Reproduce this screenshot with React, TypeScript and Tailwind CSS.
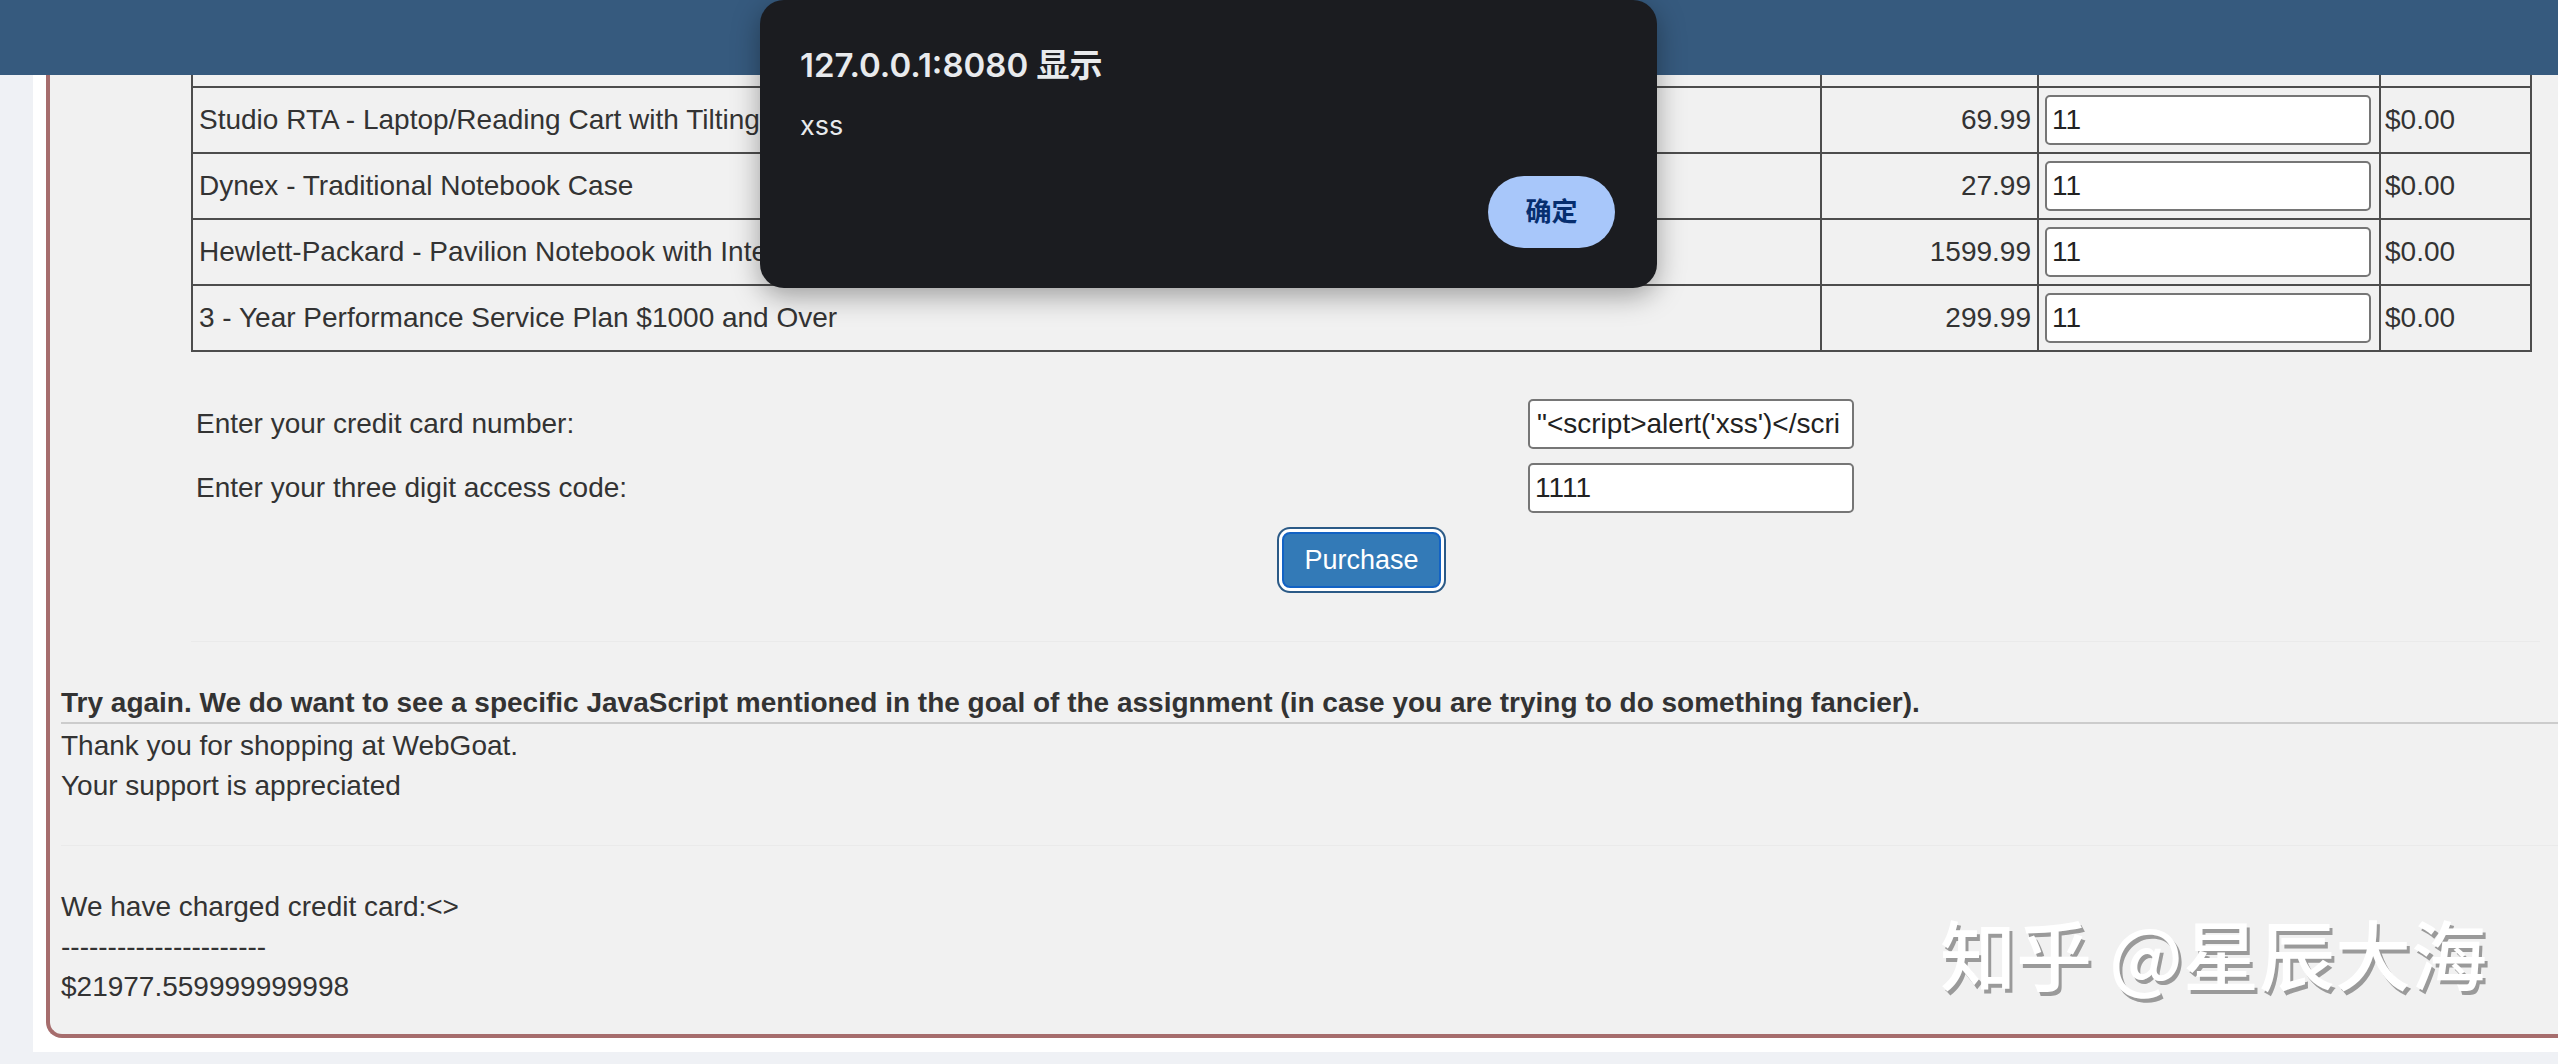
import React from 'react';

const items = [
  { name: 'Studio RTA - Laptop/Reading Cart with Tilting Surface - Cherry', price: '69.99' },
  { name: 'Dynex - Traditional Notebook Case', price: '27.99' },
  { name: 'Hewlett-Packard - Pavilion Notebook with Intel Centrino', price: '1599.99' },
  { name: '3 - Year Performance Service Plan $1000 and Over', price: '299.99' },
];

const AlertDialog = () => (
  <div className="absolute left-[760px] top-0 flex h-[288px] w-[897px] flex-col rounded-[24px] bg-[#1b1c20] px-[40px] pt-[45px] font-['Inter','Noto_Sans_CJK_SC',sans-serif] shadow-[0_8px_28px_rgba(0,0,0,0.35)]">
    <div className="text-[33px] font-semibold leading-[40px] text-[#e8eaed]">127.0.0.1:8080 显示</div>
    <div className="mt-[21px] text-[27px] leading-[40px] text-[#e8eaed]">xss</div>
    <div className="mt-[30px] flex justify-end pr-[2px]">
      <button className="flex h-[72px] w-[127px] items-center justify-center rounded-full bg-[#a8c7fa] text-[26px] font-bold text-[#062e6f]">
        确定
      </button>
    </div>
  </div>
);

export default function App() {
  return (
    <div className="relative h-[1064px] w-[2558px] overflow-hidden bg-[#eff1f5] font-['Liberation_Sans',Arial,sans-serif] text-[28px] leading-[40px] text-[#333]">
      <div className="h-[75px] bg-[#365a7e]" />

      <div className="pb-[12px] pl-[33px]">
        <div className="bg-white pb-[14px] pl-[13px]">
          <div className="rounded-bl-[16px] border-b-4 border-l-4 border-[#a66d6d] bg-[#f1f1f1] pb-[27px]">
            {/* cart table, header row is under the nav bar */}
            <div className="ml-[141px] w-[2341px] border-x-2 border-[#4d4d4d]">
              <div className="flex h-[13px] border-b-2 border-[#4d4d4d]">
                <div className="w-[1629px] border-r-2 border-[#4d4d4d]" />
                <div className="w-[217px] border-r-2 border-[#4d4d4d]" />
                <div className="w-[342px] border-r-2 border-[#4d4d4d]" />
                <div className="w-[149px]" />
              </div>
              {items.map(item => (
                <div key={item.name} className="flex h-[66px] border-b-2 border-[#4d4d4d]">
                  <div className="flex w-[1629px] items-center overflow-hidden whitespace-nowrap border-r-2 border-[#4d4d4d] pl-[6px]">
                    {item.name}
                  </div>
                  <div className="flex w-[217px] items-center justify-end border-r-2 border-[#4d4d4d] pr-[6px]">
                    {item.price}
                  </div>
                  <div className="flex w-[342px] items-center border-r-2 border-[#4d4d4d] pl-[6px]">
                    <div className="h-[50px] w-[326px] rounded-[5px] border-2 border-[#767676] bg-white px-[5px] leading-[46px] text-[#222]">
                      11
                    </div>
                  </div>
                  <div className="flex w-[149px] items-center pl-[4px]">$0.00</div>
                </div>
              ))}
            </div>

            {/* payment form */}
            <div className="ml-[141px] mt-[40px] w-[2341px]">
              <div className="flex h-[64px] items-center">
                <div className="w-[1337px] pl-[5px]">Enter your credit card number:</div>
                <div className="h-[50px] w-[326px] overflow-hidden whitespace-nowrap rounded-[5px] border-2 border-[#767676] bg-white pl-[7px] pr-[12px] leading-[46px] text-[#222]">
                  <div className="overflow-hidden">"&lt;script&gt;alert('xss')&lt;/script&gt;</div>
                </div>
              </div>
              <div className="flex h-[64px] items-center">
                <div className="w-[1337px] pl-[5px]">Enter your three digit access code:</div>
                <div className="h-[50px] w-[326px] overflow-hidden whitespace-nowrap rounded-[5px] border-2 border-[#767676] bg-white px-[5px] leading-[46px] text-[#222]">
                  1111
                </div>
              </div>
              <div className="flex h-[80px] items-center justify-center">
                <button className="h-[56px] w-[159px] rounded-[8px] border-2 border-[#1262c4] bg-[#337ab7] text-[27px] text-white shadow-[0_0_0_3px_#ffffff,0_0_0_5px_#2b5a87]">
                  Purchase
                </button>
              </div>
            </div>

            <div className="ml-[141px] mt-[41px] w-[2349px] border-t border-[#eaeaea]" />

            {/* feedback output */}
            <div className="mt-[41px] pl-[11px]">
              <div className="border-b-2 border-[#cccccc] font-bold leading-[39px]">
                Try again. We do want to see a specific JavaScript mentioned in the goal of the assignment (in case you are trying to do something fancier).
              </div>
              <div className="mt-[2px]">Thank you for shopping at WebGoat.</div>
              <div>Your support is appreciated</div>
              <div className="mb-[41px] mt-[39px] border-t border-[#eaeaea]" />
              <div>We have charged credit card:&lt;&gt;</div>
              <div>----------------------</div>
              <div>$21977.559999999998</div>
            </div>
          </div>
        </div>
      </div>

      {/* watermark */}
      <div className="absolute left-[1940px] top-[914px] font-['Noto_Sans_CJK_SC',sans-serif] text-[76px] font-medium leading-none text-white [text-shadow:3px_4px_0_#9a9a9a]">
        知乎 @星辰大海
      </div>

      <AlertDialog />
    </div>
  );
}
